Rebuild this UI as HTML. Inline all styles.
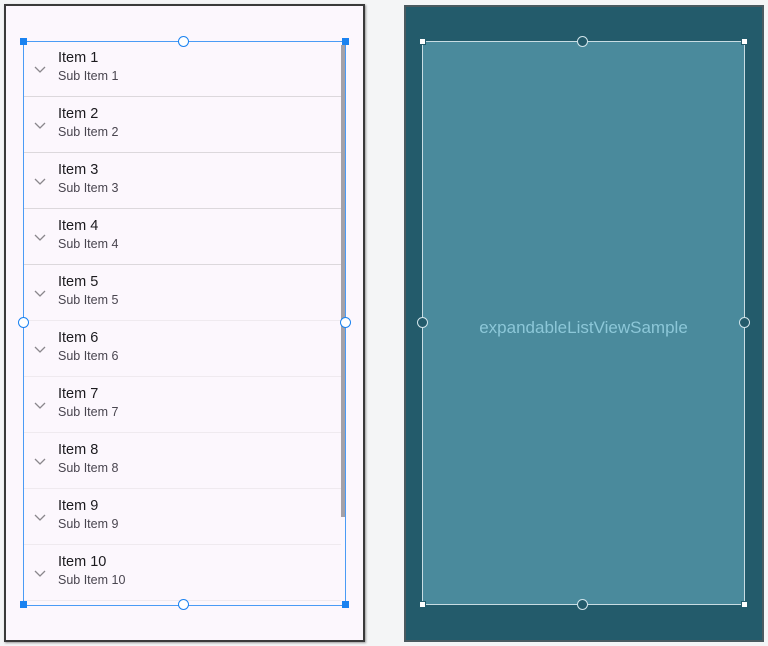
<!DOCTYPE html>
<html><head><meta charset="utf-8"><style>
*{margin:0;padding:0;box-sizing:border-box}
body{width:768px;height:646px;background:#f4f5f6;position:relative;overflow:hidden;font-family:"Liberation Sans",sans-serif}
.abs{position:absolute}
.row{position:absolute;left:24px;width:317px;height:56px;border-bottom:1px solid #dcd8dc}
.row .t{position:absolute;left:34px;top:9px;font-size:14.5px;color:#1c1b1f}
.row .s{position:absolute;left:34px;top:28px;font-size:12.5px;color:#49454f}
.row svg{position:absolute;left:10px;top:25px}
</style></head><body>
<div class="abs" style="left:4px;top:4px;width:361px;height:638px;border:2px solid #3a3a3a;background:#fcf7fd;box-shadow:1px 1px 2px #999"></div>
<div class="abs" style="left:404px;top:5px;width:360px;height:637px;border:2px solid #4a5a60;background:#235b6b"></div>
<div class="abs" style="left:422px;top:41px;width:323px;height:564px;background:#4a8a9c;border:1px solid #c8dde3"></div>
<div class="abs" style="left:422px;top:318px;width:323px;text-align:center;font-size:17px;color:#8cc7d8">expandableListViewSample</div>

<div class="row" style="top:41px"><svg width="12" height="8"><path d="M1 1l5 5 5-5" fill="none" stroke="#8a878c" stroke-width="1.3"/></svg><div class="t">Item 1</div><div class="s">Sub Item 1</div></div>
<div class="row" style="top:97px"><svg width="12" height="8"><path d="M1 1l5 5 5-5" fill="none" stroke="#8a878c" stroke-width="1.3"/></svg><div class="t">Item 2</div><div class="s">Sub Item 2</div></div>
<div class="row" style="top:153px"><svg width="12" height="8"><path d="M1 1l5 5 5-5" fill="none" stroke="#8a878c" stroke-width="1.3"/></svg><div class="t">Item 3</div><div class="s">Sub Item 3</div></div>
<div class="row" style="top:209px"><svg width="12" height="8"><path d="M1 1l5 5 5-5" fill="none" stroke="#8a878c" stroke-width="1.3"/></svg><div class="t">Item 4</div><div class="s">Sub Item 4</div></div>
<div class="row" style="top:265px;border-color:#efeaef"><svg width="12" height="8"><path d="M1 1l5 5 5-5" fill="none" stroke="#8a878c" stroke-width="1.3"/></svg><div class="t">Item 5</div><div class="s">Sub Item 5</div></div>
<div class="row" style="top:321px;border-color:#efeaef"><svg width="12" height="8"><path d="M1 1l5 5 5-5" fill="none" stroke="#8a878c" stroke-width="1.3"/></svg><div class="t">Item 6</div><div class="s">Sub Item 6</div></div>
<div class="row" style="top:377px;border-color:#efeaef"><svg width="12" height="8"><path d="M1 1l5 5 5-5" fill="none" stroke="#8a878c" stroke-width="1.3"/></svg><div class="t">Item 7</div><div class="s">Sub Item 7</div></div>
<div class="row" style="top:433px;border-color:#efeaef"><svg width="12" height="8"><path d="M1 1l5 5 5-5" fill="none" stroke="#8a878c" stroke-width="1.3"/></svg><div class="t">Item 8</div><div class="s">Sub Item 8</div></div>
<div class="row" style="top:489px;border-color:#efeaef"><svg width="12" height="8"><path d="M1 1l5 5 5-5" fill="none" stroke="#8a878c" stroke-width="1.3"/></svg><div class="t">Item 9</div><div class="s">Sub Item 9</div></div>
<div class="row" style="top:545px;border-color:#efeaef"><svg width="12" height="8"><path d="M1 1l5 5 5-5" fill="none" stroke="#8a878c" stroke-width="1.3"/></svg><div class="t">Item 10</div><div class="s">Sub Item 10</div></div>

<div class="abs" style="left:341px;top:45px;width:4px;height:472px;background:#a4a1a8"></div>
<div class="abs" style="left:23px;top:41px;width:323px;height:565px;border:1px solid #4a9bf5;z-index:5"></div>
<div class="abs" style="z-index:6;left:20px;top:38px;width:7px;height:7px;background:#1a82f0"></div>
<div class="abs" style="z-index:6;left:342px;top:38px;width:7px;height:7px;background:#1a82f0"></div>
<div class="abs" style="z-index:6;left:20px;top:601px;width:7px;height:7px;background:#1a82f0"></div>
<div class="abs" style="z-index:6;left:342px;top:601px;width:7px;height:7px;background:#1a82f0"></div>
<div class="abs" style="z-index:6;left:178px;top:36px;width:11px;height:11px;border-radius:50%;border:1px solid #1a82f0;background:#fff"></div>
<div class="abs" style="z-index:6;left:178px;top:599px;width:11px;height:11px;border-radius:50%;border:1px solid #1a82f0;background:#fff"></div>
<div class="abs" style="z-index:6;left:18px;top:317px;width:11px;height:11px;border-radius:50%;border:1px solid #1a82f0;background:#fff"></div>
<div class="abs" style="z-index:6;left:340px;top:317px;width:11px;height:11px;border-radius:50%;border:1px solid #1a82f0;background:#fff"></div>
<div class="abs" style="left:419px;top:38px;width:7px;height:7px;background:#fff;border:1px solid #235b6b"></div>
<div class="abs" style="left:741px;top:38px;width:7px;height:7px;background:#fff;border:1px solid #235b6b"></div>
<div class="abs" style="left:419px;top:601px;width:7px;height:7px;background:#fff;border:1px solid #235b6b"></div>
<div class="abs" style="left:741px;top:601px;width:7px;height:7px;background:#fff;border:1px solid #235b6b"></div>
<div class="abs" style="left:577px;top:36px;width:11px;height:11px;border-radius:50%;border:1px solid #d0e4ea;background:#235b6b"></div>
<div class="abs" style="left:577px;top:599px;width:11px;height:11px;border-radius:50%;border:1px solid #d0e4ea;background:#235b6b"></div>
<div class="abs" style="left:417px;top:317px;width:11px;height:11px;border-radius:50%;border:1px solid #d0e4ea;background:#235b6b"></div>
<div class="abs" style="left:739px;top:317px;width:11px;height:11px;border-radius:50%;border:1px solid #d0e4ea;background:#235b6b"></div>
</body></html>
